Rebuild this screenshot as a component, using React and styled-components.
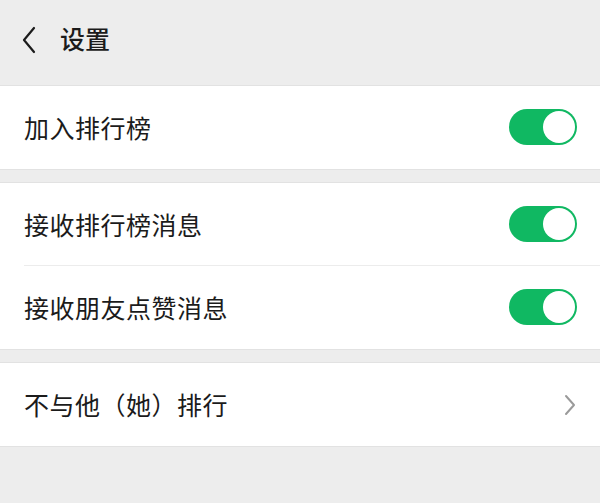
import React from 'react'
import styled, { createGlobalStyle } from 'styled-components'

const GlobalStyle = createGlobalStyle`
  html, body {
    margin: 0;
    padding: 0;
    background: #ededed;
  }
  body {
    font-family: "Noto Sans CJK SC", "Noto Sans", sans-serif;
    color: #1b1b1b;
  }
`

function Toggle({ on }) {
  return (
    <Track on={on ? 1 : 0}>
      <Knob />
    </Track>
  )
}

function Chevron() {
  return (
    <ChevronIcon width="14" height="22" viewBox="0 0 14 22">
      <path d="M3 2 L11 11 L3 20" fill="none" stroke="#9a9a9a" strokeWidth="2" strokeLinecap="round" strokeLinejoin="round" />
    </ChevronIcon>
  )
}

export default function App() {
  return (
    <Page>
      <GlobalStyle />
      <Header>
        <BackIcon width="16" height="28" viewBox="0 0 16 28">
          <path d="M13 2 L3 14 L13 26" fill="none" stroke="#1b1b1b" strokeWidth="2.2" strokeLinecap="round" strokeLinejoin="round" />
        </BackIcon>
        <Title>设置</Title>
      </Header>

      <Group>
        <Row>
          <Label>加入排行榜</Label>
          <Toggle on />
        </Row>
      </Group>

      <Group>
        <Row divider>
          <Label>接收排行榜消息</Label>
          <Toggle on />
        </Row>
        <Row>
          <Label>接收朋友点赞消息</Label>
          <Toggle on />
        </Row>
      </Group>

      <Group>
        <Row>
          <Label>不与他（她）排行</Label>
          <Chevron />
        </Row>
      </Group>
    </Page>
  )
}

const Page = styled.div`
  width: 600px;
  height: 503px;
  background: #ededed;
  display: flex;
  flex-direction: column;
  overflow: hidden;
`

const Header = styled.div`
  height: 85px;
  display: flex;
  align-items: center;
  padding-left: 21px;
  box-sizing: border-box;
  flex-shrink: 0;
`

const BackIcon = styled.svg`
  margin-top: -6px;
`

const Title = styled.div`
  margin-left: 23px;
  font-size: 25px;
  font-weight: 500;
  margin-top: -9px;
`

const Group = styled.div`
  background: #fff;
  border-top: 1px solid #e2e2e2;
  border-bottom: 1px solid #e2e2e2;
  margin-bottom: 12px;
  flex-shrink: 0;
`

const Row = styled.div`
  height: 83px;
  display: flex;
  align-items: center;
  justify-content: space-between;
  padding: 0 23px 0 24px;
  position: relative;
  &::after {
    content: '';
    display: ${p => (p.divider ? 'block' : 'none')};
    position: absolute;
    left: 24px;
    right: 0;
    bottom: 0;
    height: 1px;
    background: #ececec;
  }
`

const Label = styled.div`
  font-size: 25px;
  letter-spacing: 0.5px;
  margin-top: -2px;
`

const Track = styled.div`
  width: 68px;
  height: 36px;
  border-radius: 18px;
  background: ${p => (p.on ? '#10b862' : '#e5e5e5')};
  display: flex;
  align-items: center;
  justify-content: ${p => (p.on ? 'flex-end' : 'flex-start')};
  padding: 0 2px;
  box-sizing: border-box;
  margin-top: -2px;
`

const Knob = styled.div`
  width: 32px;
  height: 32px;
  border-radius: 50%;
  background: #fff;
`

const ChevronIcon = styled.svg`
  margin-right: 0;
`
